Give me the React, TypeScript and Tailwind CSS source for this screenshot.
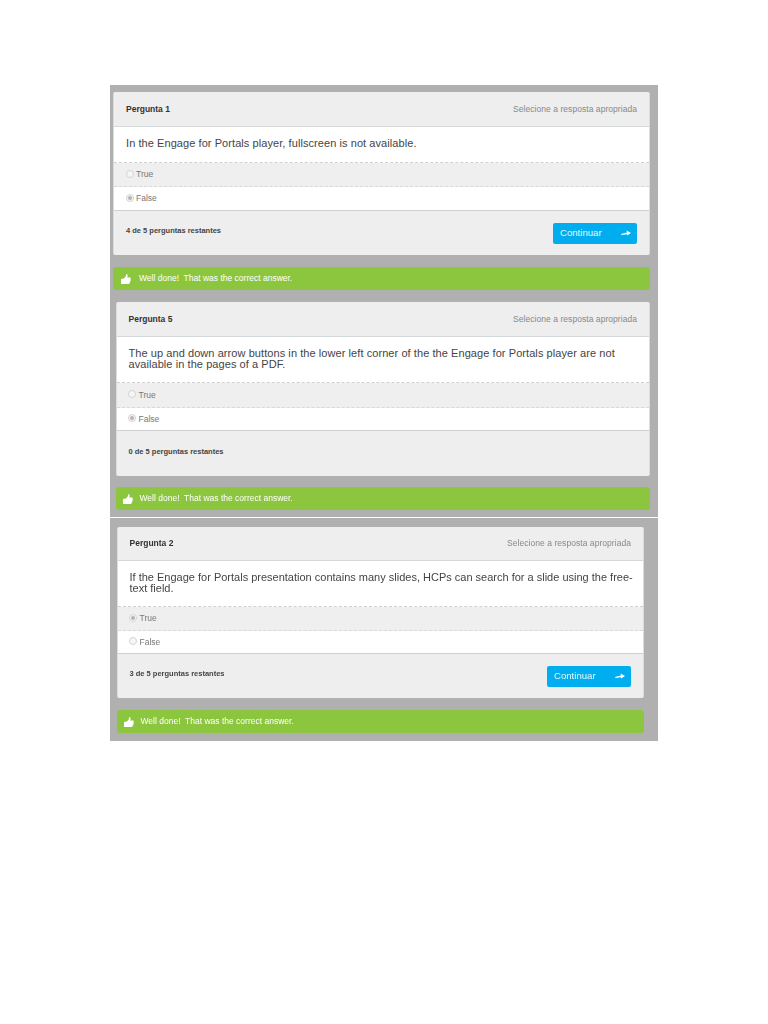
// App.tsx

type Question = {
  title: string;
  text: string;
  selected: "True" | "False";
  remaining: string;
  showButton: boolean;
  cardClass: string;
  alertClass: string;
  headerClass: string;
  questionClass: string;
  textClass: string;
  trueClass: string;
  falseClass: string;
  footerClass: string;
};

const questions: Question[] = [
  {
    title: "Pergunta 1",
    text: "In the Engage for Portals player, fullscreen is not available.",
    selected: "False",
    remaining: "4 de 5 perguntas restantes",
    showButton: true,
    cardClass: "ml-[3px] w-[537px]",
    alertClass: "ml-[3px] w-[537px] mt-3 pl-[7.5px] gap-[8.5px]",
    headerClass: "h-[35px]",
    questionClass: "h-[36px] pr-[12px]",
    textClass: "tracking-[0.07px]",
    trueClass: "h-[24px]",
    falseClass: "h-[24px]",
    footerClass: "h-[44px]",
  },
  {
    title: "Pergunta 5",
    text: "The up and down arrow buttons in the lower left corner of the the Engage for Portals player are not available in the pages of a PDF.",
    selected: "False",
    remaining: "0 de 5 perguntas restantes",
    showButton: false,
    cardClass: "ml-[5.5px] w-[534.5px] mt-3",
    alertClass: "ml-[5.5px] w-[534.5px] mt-[11px] pl-[7px] gap-[7px]",
    headerClass: "h-[35px]",
    questionClass: "h-[46px] pr-[12px]",
    textClass: "tracking-[0.07px]",
    trueClass: "h-[25px]",
    falseClass: "h-[23px]",
    footerClass: "h-[45px]",
  },
  {
    title: "Pergunta 2",
    text: "If the Engage for Portals presentation contains many slides, HCPs can search for a slide using the free-text field.",
    selected: "True",
    remaining: "3 de 5 perguntas restantes",
    showButton: true,
    cardClass: "ml-[6.5px] w-[527.5px]",
    alertClass: "ml-[6.5px] w-[527.5px] mt-3 pl-[7px] gap-[7px]",
    headerClass: "h-[34px]",
    questionClass: "h-[46px] pr-[6px]",
    textClass: "tracking-normal",
    trueClass: "h-[24px]",
    falseClass: "h-[23px]",
    footerClass: "h-[44px]",
  },
];

function ThumbIcon() {
  return (
    <svg viewBox="0 0 10 10" className="h-[10px] w-[10px] shrink-0" fill="white">
      <path d="M0 5 L3 4.5 L5 2 L5 0.3 C6 0 7 0.6 6.6 2.4 L6.2 3.6 H9 C10 3.6 10 5 9.4 5.2 C10 5.6 9.8 6.8 9.2 7 C9.6 7.4 9.2 8.4 8.7 8.6 C8.9 9.4 8.3 10 7.6 10 H0 Z" />
    </svg>
  );
}

function ArrowIcon() {
  return (
    <svg viewBox="0 0 10 6" className="h-[6px] w-[10px] shrink-0" fill="white">
      <path d="M0 4 L6 2.6 L5.5 0.5 L10 3 L6 5.5 L6 4.2 L0.5 5 Z" />
    </svg>
  );
}

function Radio({ checked }: { checked: boolean }) {
  return (
    <span className="-mt-[2px] flex h-[8px] w-[8px] items-center justify-center rounded-full border border-[#d4d4d4] bg-[#f6f6f6]">
      {checked && <span className="h-[4px] w-[4px] rounded-full bg-[#b4b4b4]" />}
    </span>
  );
}

function QuestionCard({ q }: { q: Question }) {
  return (
    <div className={`rounded-[2px] border-x border-[#dcdcdc] bg-[#eeeeee] ${q.cardClass}`}>
      <div className={`flex items-center justify-between border-b border-[#d6d9d9] px-[12px] ${q.headerClass}`}>
        <span className="text-[8.5px] font-bold text-[#333333]">{q.title}</span>
        <span className="text-[8.5px] tracking-[0.05px] text-[#888888]">Selecione a resposta apropriada</span>
      </div>
      <div className={`border-b border-dashed border-[#d0d0d0] bg-white pl-[12px] pt-[11px] ${q.questionClass}`}>
        <p className={`text-[11px] leading-[11px] text-[#444444] ${q.textClass}`}>{q.text}</p>
      </div>
      <div className={`flex items-center gap-[2.5px] border-b border-dashed border-[#d8d8d8] bg-[#efefef] pl-[11.5px] ${q.trueClass}`}>
        <Radio checked={q.selected === "True"} />
        <span className="text-[8.5px] text-[#777777]">True</span>
      </div>
      <div className={`flex items-center gap-[2.5px] border-b border-[#cfcfcf] bg-white pl-[11.5px] ${q.falseClass}`}>
        <Radio checked={q.selected === "False"} />
        <span className="text-[8.5px] text-[#777777]">False</span>
      </div>
      <div className={`flex items-center justify-between px-[12px] ${q.footerClass}`}>
        <span className="-mt-[4px] text-[7.5px] font-bold text-[#444444]">{q.remaining}</span>
        {q.showButton && (
          <button className="flex h-[21px] w-[84px] items-center justify-between rounded-[2px] bg-[#00aeef] pl-[7px] pr-[6px] text-[9.6px] text-[#e6f7fd]">
            Continuar
            <ArrowIcon />
          </button>
        )}
      </div>
    </div>
  );
}

function SuccessAlert({ className }: { className: string }) {
  return (
    <div className={`flex h-[23px] items-center rounded-[3px] bg-[#8cc63f] text-[8.5px] text-white ${className}`}>
      <ThumbIcon />
      <span>Well done!&nbsp; That was the correct answer.</span>
    </div>
  );
}

export default function App() {
  return (
    <div className="min-h-[1024px] bg-white pt-[85px] pl-[110px] font-['Liberation_Sans',Arial,sans-serif]">
      <div className="w-[548px] blur-[0.4px]">
        <div className="bg-[#b0b0b0] pt-[7px] pb-[7px]">
          <QuestionCard q={questions[0]} />
          <SuccessAlert className={questions[0].alertClass} />
          <QuestionCard q={questions[1]} />
          <SuccessAlert className={questions[1].alertClass} />
        </div>
        <div className="mt-px bg-[#b0b0b0] pt-[9px] pb-[8px]">
          <QuestionCard q={questions[2]} />
          <SuccessAlert className={questions[2].alertClass} />
        </div>
      </div>
    </div>
  );
}
